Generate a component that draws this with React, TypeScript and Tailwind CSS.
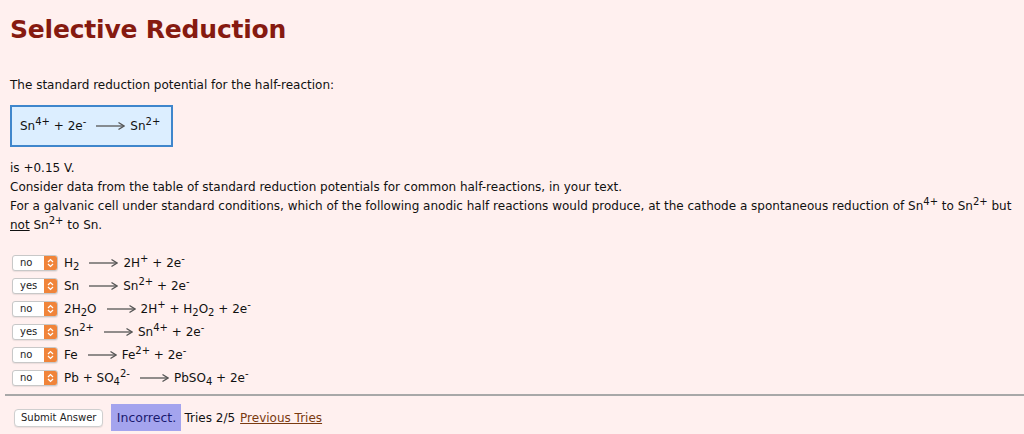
import React from "react";

const Arrow = () => (
  <svg width="30" height="10" viewBox="0 0 30 10" className="inline-block ml-[9px] mr-[5px] align-middle">
    <line x1="1" y1="5" x2="28.5" y2="5" stroke="#555" strokeWidth="1.3" />
    <path d="M23.5 1.5 L29 5 L23.5 8.5" fill="none" stroke="#555" strokeWidth="1.3" />
  </svg>
);

const Sel = ({ v }: { v: string }) => (
  <span className="inline-flex items-stretch h-[16px] w-[46px] rounded-[3px] border border-[#c8c8c8] bg-white overflow-hidden mr-[6px] align-middle shadow-[0_1px_1px_rgba(0,0,0,0.08)]">
    <span className="flex-1 text-[10px] leading-[14px] pl-[7px] text-[#222]">{v}</span>
    <span className="w-[13px] bg-[#f0843a] flex items-center justify-center">
      <svg width="7" height="10" viewBox="0 0 7 10">
        <path d="M1 4 L3.5 1.5 L6 4 M1 6 L3.5 8.5 L6 6" fill="none" stroke="white" strokeWidth="1.2" />
      </svg>
    </span>
  </span>
);

const rows: { v: string; left: React.ReactNode; right: React.ReactNode }[] = [
  { v: "no", left: <>H<sub>2</sub></>, right: <>2H<sup>+</sup> + 2e<sup>-</sup></> },
  { v: "yes", left: <>Sn</>, right: <>Sn<sup>2+</sup> + 2e<sup>-</sup></> },
  { v: "no", left: <>2H<sub>2</sub>O</>, right: <>2H<sup>+</sup> + H<sub>2</sub>O<sub>2</sub> + 2e<sup>-</sup></> },
  { v: "yes", left: <>Sn<sup>2+</sup></>, right: <>Sn<sup>4+</sup> + 2e<sup>-</sup></> },
  { v: "no", left: <>Fe</>, right: <>Fe<sup>2+</sup> + 2e<sup>-</sup></> },
  { v: "no", left: <>Pb + SO<sub>4</sub><sup>2-</sup></>, right: <>PbSO<sub>4</sub> + 2e<sup>-</sup></> },
];

export default function App() {
  return (
    <div className="w-[1024px] h-[434px] bg-[#fff0ef] text-[#111] overflow-hidden font-['DejaVu_Sans',Verdana,sans-serif] text-[12px] [&_sup]:text-[10px] [&_sub]:text-[10px] [&_sup]:leading-none [&_sub]:leading-none">
      <div className="pl-[10px] pr-[5px]">
        <h1 className="text-[#861a10] font-bold text-[25px] leading-[30px] pt-[15px] tracking-[-0.2px]">Selective Reduction</h1>
        <p className="mt-[32px] leading-[16px]">The standard reduction potential for the half-reaction:</p>
        <div className="mt-[12px] w-[163px] h-[42px] border-2 border-[#3f86cc] bg-[#dceeff] flex items-center pl-[8px]">
          <span>Sn<sup>4+</sup> + 2e<sup>-</sup></span>
          <Arrow />
          <span>Sn<sup>2+</sup></span>
        </div>
        <p className="mt-[12px] leading-[19px]">is +0.15 V.</p>
        <p className="leading-[19px]">Consider data from the table of standard reduction potentials for common half-reactions, in your text.</p>
        <p className="leading-[19px]">
          For a galvanic cell under standard conditions, which of the following anodic half reactions would produce, at the cathode a spontaneous reduction of Sn<sup>4+</sup> to Sn<sup>2+</sup> but <u>not</u> Sn<sup>2+</sup> to Sn.
        </p>
        <div className="mt-[19px] flex flex-col gap-[5px]">
          {rows.map((r, i) => (
            <div key={i} className="h-[18px] flex items-center pl-[2px]">
              <Sel v={r.v} />
              <span>{r.left}</span>
              <Arrow />
              <span>{r.right}</span>
            </div>
          ))}
        </div>
      </div>
      <div className="ml-[5px] mt-[7px] border-t-2 border-[#a8a8a8]" />
      <div className="flex items-center pl-[14px] mt-[8px]">
        <button className="h-[18px] px-[6px] rounded-[4px] border border-[#cfcfcf] bg-white text-[10px] text-[#222] shadow-[0_1px_1px_rgba(0,0,0,0.08)]">Submit Answer</button>
        <span className="ml-[8px] h-[27px] w-[70px] pt-[2px] bg-[#a4a4ee] text-[#1a1a6e] text-[12.5px] flex items-center justify-center">Incorrect.</span>
        <span className="ml-[3px] text-[12px]">Tries 2/5</span>
        <span className="ml-[5px] text-[12px] text-[#7a3a10] underline">Previous Tries</span>
      </div>
    </div>
  );
}
